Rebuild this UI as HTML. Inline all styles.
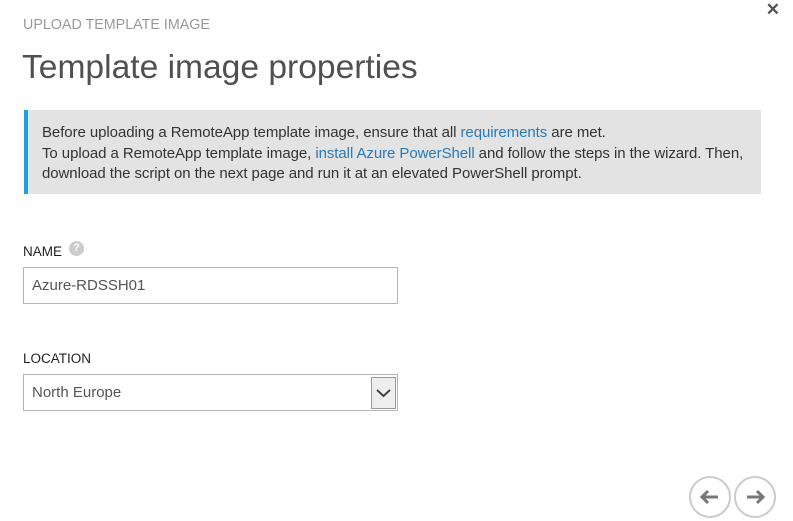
<!DOCTYPE html>
<html><head><style>
body{margin:0;width:793px;height:521px;background:#fff;font-family:"Liberation Sans",sans-serif;position:relative;overflow:hidden}
.a{position:absolute}
.sub{left:23px;top:17px;font-size:14.3px;color:#9a9a9a}
.title{left:22px;top:49px;font-size:33.6px;color:#505050;font-weight:300}
.info{left:24px;top:110px;width:733px;height:84px;background:#e3e3e3;border-left:4px solid #1ba1e2}
.info p{margin:0;position:absolute;left:14px;top:13px;font-size:15px;line-height:20.5px;color:#333;letter-spacing:-0.07px;white-space:nowrap}
.info a{color:#2a7ab8;text-decoration:none}
.lbl{font-size:13.5px;color:#222;left:23px}
.box{left:23px;width:373px;height:35px;border:1px solid #b5b5b5;font-size:15px;color:#555;line-height:35px;text-indent:8px}
.circ{width:38px;height:38px;border:2px solid #ccc;border-radius:50%;top:476px}
</style></head><body>
<div class="a" style="right:13px;top:0px;font-size:17px;font-weight:bold;color:#555">✕</div>
<div class="a sub">UPLOAD TEMPLATE IMAGE</div>
<div class="a title">Template image properties</div>
<div class="a info"><p>Before uploading a RemoteApp template image, ensure that all <a>requirements</a> are met.<br>To upload a RemoteApp template image, <a>install Azure PowerShell</a> and follow the steps in the wizard. Then,<br>download the script on the next page and run it at an elevated PowerShell prompt.</p></div>
<div class="a lbl" style="top:244px">NAME</div>
<div class="a" style="left:69px;top:241px;width:15px;height:15px;border-radius:50%;background:#ccc;color:#fff;font-size:11px;font-weight:bold;text-align:center;line-height:15px">?</div>
<div class="a box" style="top:267px">Azure-RDSSH01</div>
<div class="a lbl" style="top:351px">LOCATION</div>
<div class="a box" style="top:374px">North Europe</div>
<div class="a" style="left:371px;top:377px;width:23px;height:30px;border:1px solid #999;background:#eee">
<svg width="23" height="30"><path d="M5 12l6.5 6 6.5-6" stroke="#444" stroke-width="2" fill="none"/></svg></div>
<div class="a circ" style="left:689px"><svg width="38" height="38"><path d="M27 19H11M17 13l-6 6 6 6" stroke="#777" stroke-width="3" fill="none"/></svg></div>
<div class="a circ" style="left:734px"><svg width="38" height="38"><path d="M11 19h16M21 13l6 6-6 6" stroke="#777" stroke-width="3" fill="none"/></svg></div>
</body></html>
